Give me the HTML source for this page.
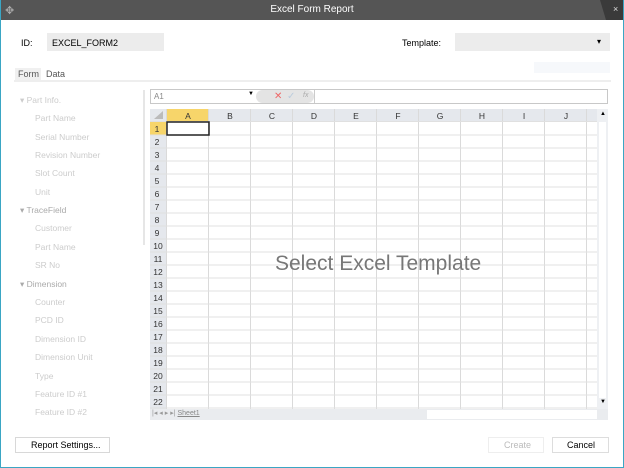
<!DOCTYPE html><html><head><style>
*{margin:0;padding:0;box-sizing:border-box}
body{width:624px;height:468px;overflow:hidden;font-family:"Liberation Sans",sans-serif;background:#fff;position:relative}
.frame{position:absolute;left:0;top:0;width:624px;height:468px;border:1px solid #3aa6c4;border-top:none}
.title{position:absolute;left:0;top:0;width:624px;height:20px;background:#555;color:#fff;font-size:10px;text-align:center;line-height:20px}
.ab{position:absolute}
.t{position:absolute;font-size:9px;white-space:nowrap}
.li{position:absolute;font-size:8.5px;color:#ccc;white-space:nowrap}
.grid{position:absolute;left:150px;top:109px;width:447px;height:300px;background:#fff;overflow:hidden}
</style></head><body>
<div class="title">Excel Form Report</div>
<div class="ab" style="left:594px;top:0;width:30px;height:20px;background:#3a3a3a;clip-path:polygon(20% 0,100% 0,100% 100%,40% 100%)"></div>
<div class="t" style="left:613px;top:4px;color:#ddd">×</div>
<div class="t" style="left:5px;top:4px;color:#aaa;font-size:11px">✥</div>
<div class="t" style="left:21px;top:38px">ID:</div>
<div class="ab" style="left:47px;top:33px;width:117px;height:18px;background:#ececec"></div>
<div class="t" style="left:52px;top:38px">EXCEL_FORM2</div>
<div class="t" style="left:402px;top:38px">Template:</div>
<div class="ab" style="left:455px;top:33px;width:155px;height:18px;background:#ececec"></div>
<div class="t" style="left:597px;top:37px;font-size:8px">▾</div>
<div class="ab" style="left:534px;top:62px;width:76px;height:11px;background:#f6f8fb"></div>
<div class="ab" style="left:15px;top:68px;width:26px;height:12px;background:#f0f0f0"></div>
<div class="t" style="left:18px;top:69px;color:#555">Form</div>
<div class="t" style="left:46px;top:69px;color:#555">Data</div>
<div class="ab" style="left:14px;top:80px;width:597px;height:2px;background:#eee"></div>
<div class="ab" style="left:143px;top:90px;width:2px;height:155px;background:#e6e6e6"></div>
<div class="li" style="left:20px;top:95px">▾ Part Info.</div>
<div class="li" style="left:35px;top:113px">Part Name</div>
<div class="li" style="left:35px;top:132px">Serial Number</div>
<div class="li" style="left:35px;top:150px">Revision Number</div>
<div class="li" style="left:35px;top:168px">Slot Count</div>
<div class="li" style="left:35px;top:187px">Unit</div>
<div class="li" style="left:20px;top:205px;color:#aaa">▾ TraceField</div>
<div class="li" style="left:35px;top:223px">Customer</div>
<div class="li" style="left:35px;top:242px">Part Name</div>
<div class="li" style="left:35px;top:260px">SR No</div>
<div class="li" style="left:20px;top:279px;color:#aaa">▾ Dimension</div>
<div class="li" style="left:35px;top:297px">Counter</div>
<div class="li" style="left:35px;top:315px">PCD ID</div>
<div class="li" style="left:35px;top:334px">Dimension ID</div>
<div class="li" style="left:35px;top:352px">Dimension Unit</div>
<div class="li" style="left:35px;top:371px">Type</div>
<div class="li" style="left:35px;top:389px">Feature ID #1</div>
<div class="li" style="left:35px;top:407px">Feature ID #2</div>
<div class="ab" style="left:150px;top:89px;width:458px;height:15px;border:1px solid #c8c8c8;background:#fff"></div>
<div class="t" style="left:154px;top:92px;color:#888;font-size:8px">A1</div>
<div class="t" style="left:248px;top:91px;font-size:6px">▼</div>
<div class="ab" style="left:256px;top:90px;width:58px;height:13px;border-radius:7px;background:#e4e4e4"></div>
<div class="t" style="left:274px;top:91px;color:#e66;font-size:10px">✕</div>
<div class="t" style="left:287px;top:91px;color:#bcd;font-size:10px">✓</div>
<div class="t" style="left:303px;top:92px;color:#aaa;font-size:7px;font-style:italic">fx</div>
<div class="ab" style="left:314px;top:90px;width:1px;height:13px;background:#ccc"></div>
<div class="grid">
<svg width="447" height="300" style="position:absolute;left:0;top:0">
<rect x="0" y="0" width="447" height="13" fill="#e5e8ed"/>
<rect x="0" y="0" width="17" height="300" fill="#e5e8ed"/>
<rect x="17" y="0" width="42" height="13" fill="#f7d56a"/>
<rect x="0" y="13" width="17" height="13" fill="#f7d56a"/>
<g stroke="#dadada" stroke-width="1">
<line x1="58.5" y1="0" x2="58.5" y2="300"/><line x1="100.5" y1="0" x2="100.5" y2="300"/><line x1="142.5" y1="0" x2="142.5" y2="300"/><line x1="184.5" y1="0" x2="184.5" y2="300"/><line x1="226.5" y1="0" x2="226.5" y2="300"/><line x1="268.5" y1="0" x2="268.5" y2="300"/><line x1="310.5" y1="0" x2="310.5" y2="300"/><line x1="352.5" y1="0" x2="352.5" y2="300"/><line x1="394.5" y1="0" x2="394.5" y2="300"/><line x1="436.5" y1="0" x2="436.5" y2="300"/><line x1="16.5" y1="0" x2="16.5" y2="300"/>
</g>
<g stroke="#e0e0e0">
<line x1="0" y1="12.5" x2="447" y2="12.5"/><line x1="0" y1="26" x2="447" y2="26"/><line x1="0" y1="39" x2="447" y2="39"/><line x1="0" y1="52" x2="447" y2="52"/><line x1="0" y1="65" x2="447" y2="65"/><line x1="0" y1="78" x2="447" y2="78"/><line x1="0" y1="91" x2="447" y2="91"/><line x1="0" y1="104" x2="447" y2="104"/><line x1="0" y1="117" x2="447" y2="117"/><line x1="0" y1="130" x2="447" y2="130"/><line x1="0" y1="143" x2="447" y2="143"/><line x1="0" y1="156" x2="447" y2="156"/><line x1="0" y1="169" x2="447" y2="169"/><line x1="0" y1="182" x2="447" y2="182"/><line x1="0" y1="195" x2="447" y2="195"/><line x1="0" y1="208" x2="447" y2="208"/><line x1="0" y1="221" x2="447" y2="221"/><line x1="0" y1="234" x2="447" y2="234"/><line x1="0" y1="247" x2="447" y2="247"/><line x1="0" y1="260" x2="447" y2="260"/><line x1="0" y1="273" x2="447" y2="273"/><line x1="0" y1="286" x2="447" y2="286"/><line x1="0" y1="299" x2="447" y2="299"/>
</g>
<rect x="17" y="13" width="42" height="13" fill="none" stroke="#222" stroke-width="1.5"/>
<polygon points="4,10 13,10 13,2" fill="#bbb"/>
<g font-family="Liberation Sans" font-size="8.5" fill="#333" text-anchor="middle">
<text x="38" y="10">A</text><text x="80" y="10">B</text><text x="122" y="10">C</text><text x="164" y="10">D</text><text x="206" y="10">E</text><text x="248" y="10">F</text><text x="290" y="10">G</text><text x="332" y="10">H</text><text x="374" y="10">I</text><text x="416" y="10">J</text>
<text x="7" y="23">1</text><text x="7" y="36">2</text><text x="7" y="49">3</text><text x="7" y="62">4</text><text x="7" y="75">5</text><text x="7" y="88">6</text><text x="7" y="101">7</text><text x="7" y="114">8</text><text x="7" y="127">9</text><text x="8" y="140">10</text><text x="8" y="153">11</text><text x="8" y="166">12</text><text x="8" y="179">13</text><text x="8" y="192">14</text><text x="8" y="205">15</text><text x="8" y="218">16</text><text x="8" y="231">17</text><text x="8" y="244">18</text><text x="8" y="257">19</text><text x="8" y="270">20</text><text x="8" y="283">21</text><text x="8" y="296">22</text>
</g>
</svg>
<div class="t" style="left:125px;top:143px;font-size:21px;color:#777">Select Excel Template</div>
</div>
<div class="ab" style="left:597px;top:109px;width:11px;height:300px;background:#eef0f3"></div>
<div class="ab" style="left:599px;top:122px;width:7px;height:276px;background:#fff"></div>
<div class="t" style="left:600px;top:111px;font-size:6px">▲</div>
<div class="t" style="left:600px;top:399px;font-size:6px">▼</div>
<div class="ab" style="left:150px;top:409px;width:458px;height:11px;background:#eaecef"></div>
<div class="t" style="left:152px;top:409px;font-size:7px;color:#999">|◂ ◂ ▸ ▸| <u style="color:#888">Sheet1</u></div>
<div class="ab" style="left:427px;top:410px;width:170px;height:9px;background:#fff"></div>
<div class="ab" style="left:15px;top:437px;width:95px;height:16px;border:1px solid #d8d8d8"></div>
<div class="t" style="left:31px;top:440px">Report Settings...</div>
<div class="ab" style="left:488px;top:437px;width:56px;height:16px;border:1px solid #eee"></div>
<div class="t" style="left:504px;top:440px;color:#bbb">Create</div>
<div class="ab" style="left:552px;top:437px;width:57px;height:16px;border:1px solid #ddd"></div>
<div class="t" style="left:567px;top:440px">Cancel</div>
<div class="frame"></div>
</body></html>
